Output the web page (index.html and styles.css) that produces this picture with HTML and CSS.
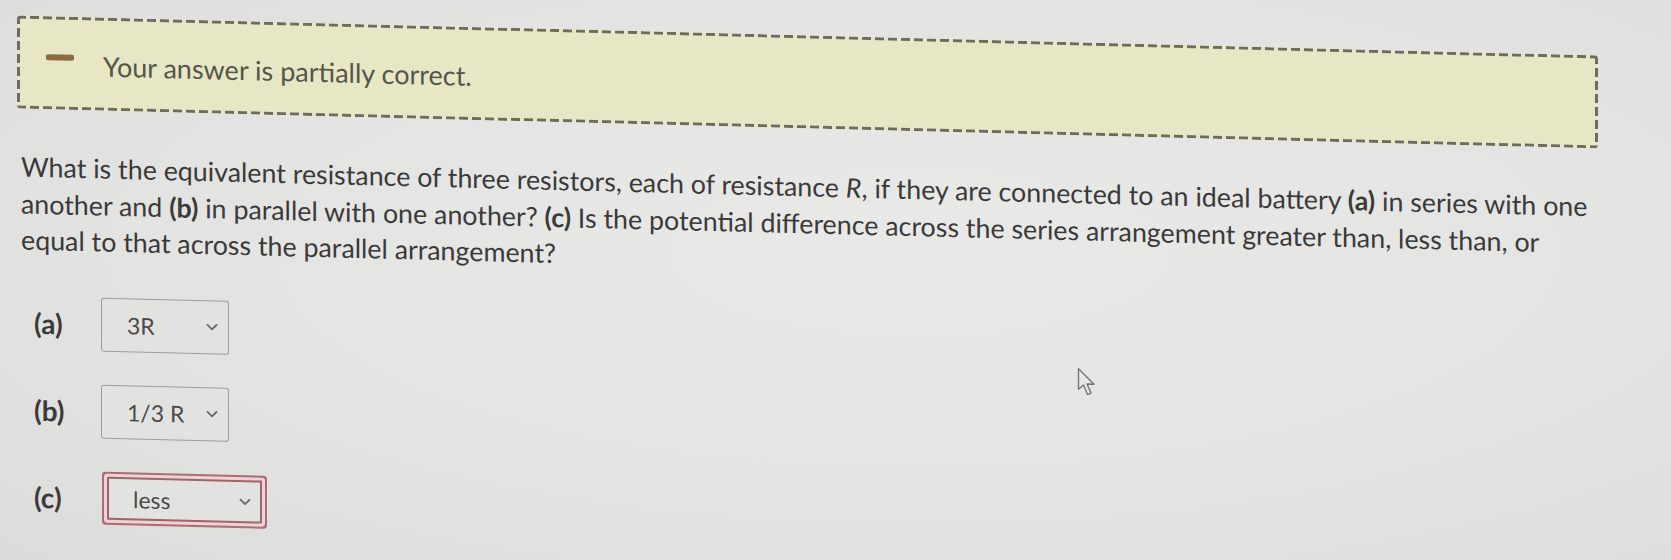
FILE: index.html
```html
<!DOCTYPE html>
<html lang="en">
<head>
<meta charset="utf-8">
<title>Question</title>
<link rel="stylesheet" href="styles.css">
</head>
<body>
<div class="page">
  <div class="feedback">
    <span class="feedback-icon"></span>
    <span class="feedback-text">Your answer is partially correct.</span>
  </div>
  <p class="question">What is the equivalent resistance of three resistors, each of resistance <i>R</i>, if they are connected to an ideal battery <b>(a)</b> in series with one another and <b>(b)</b> in parallel with one another? <b>(c)</b> Is the potential difference across the series arrangement greater than, less than, or equal to that across the parallel arrangement?</p>
  <div class="answers">
    <div class="row">
      <span class="label">(a)</span>
      <div class="select">
        <span class="value">3R</span>
        <svg class="chev" viewBox="0 0 12 8" width="12" height="8"><path d="M1.5 1.5 L6 6 L10.5 1.5" fill="none" stroke="#666" stroke-width="1.8" stroke-linecap="round" stroke-linejoin="round"/></svg>
      </div>
    </div>
    <div class="row">
      <span class="label">(b)</span>
      <div class="select">
        <span class="value">1/3 R</span>
        <svg class="chev" viewBox="0 0 12 8" width="12" height="8"><path d="M1.5 1.5 L6 6 L10.5 1.5" fill="none" stroke="#666" stroke-width="1.8" stroke-linecap="round" stroke-linejoin="round"/></svg>
      </div>
    </div>
    <div class="row">
      <span class="label">(c)</span>
      <div class="select wrong">
        <span class="value">less</span>
        <svg class="chev" viewBox="0 0 12 8" width="12" height="8"><path d="M1.5 1.5 L6 6 L10.5 1.5" fill="none" stroke="#666" stroke-width="1.8" stroke-linecap="round" stroke-linejoin="round"/></svg>
      </div>
    </div>
  </div>
  <svg class="cursor" viewBox="0 0 22 30" width="22" height="30"><path d="M1.5 1.5 L1.5 22 L6.5 17.5 L10.5 27 L14 25.5 L10 16.5 L17 16.5 Z" fill="#e8e9e7" stroke="#777" stroke-width="1.4" stroke-linejoin="round"/></svg>
</div>
</body>
</html>
```

FILE: styles.css
```css
html, body {
  margin: 0;
  padding: 0;
}
body {
  width: 1671px;
  height: 560px;
  overflow: hidden;
  background: radial-gradient(ellipse at 55% 45%, #e9eae8 0%, #e3e4e2 60%, #dcdddb 100%);
  font-family: Lato, "Open Sans", sans-serif;
  color: #3c3c3c;
}
.page {
  position: relative;
  width: 1581px;
  padding: 15px 0 0 17px;
  transform: skewY(1.45deg);
  transform-origin: 0 0;
}
.feedback {
  box-sizing: border-box;
  height: 93px;
  display: flex;
  align-items: flex-start;
  gap: 29px;
  padding: 33px 0 0 29px;
  background-color: #e7e7c6;
  background-image:
    repeating-linear-gradient(90deg, #6e6c5e 0 9px, transparent 9px 13px),
    repeating-linear-gradient(90deg, #6e6c5e 0 9px, transparent 9px 13px),
    repeating-linear-gradient(180deg, #6e6c5e 0 9px, transparent 9px 13px),
    repeating-linear-gradient(180deg, #6e6c5e 0 9px, transparent 9px 13px);
  background-size: 100% 3px, 100% 3px, 3px 100%, 3px 100%;
  background-position: 0 0, 0 100%, 0 0, 100% 0;
  background-repeat: no-repeat;
  border-radius: 4px;
}
.feedback-icon {
  display: block;
  width: 28px;
  height: 6px;
  margin-top: 5px;
  border-radius: 2px;
  background: #8c6c3e;
}
.feedback-text {
  font-size: 27px;
  line-height: 1.2;
  color: #55554a;
}
.question {
  margin: 40px 0 0 4px;
  font-size: 26.8px;
  line-height: 36.5px;
  color: #3a3a3a;
}
.question b {
  font-weight: 700;
}
.answers {
  margin-top: 37px;
  display: flex;
  flex-direction: column;
  gap: 33px;
  padding-left: 17px;
}
.row {
  height: 54px;
  display: flex;
  align-items: center;
}
.label {
  width: 67px;
  font-size: 28px;
  font-weight: 700;
  color: #3a3a3a;
}
.select {
  box-sizing: border-box;
  width: 128px;
  height: 54px;
  display: flex;
  align-items: center;
  justify-content: space-between;
  padding: 0 10px 0 25px;
  border: 1.5px solid #9d9d9b;
  border-radius: 3px;
  background: #e2e3e0;
}
.value {
  font-size: 23px;
  color: #4a4a4a;
}
.select.wrong {
  width: 155px;
  height: 43px;
  margin-left: 6px;
  padding: 0 9px 0 24px;
  border: 2px solid #a2646b;
  border-radius: 1px;
  box-shadow: 0 0 0 3px #ecd3d5, 0 0 0 5px #ad6b73;
}
.cursor {
  position: absolute;
  left: 1077px;
  top: 340px;
}
```
